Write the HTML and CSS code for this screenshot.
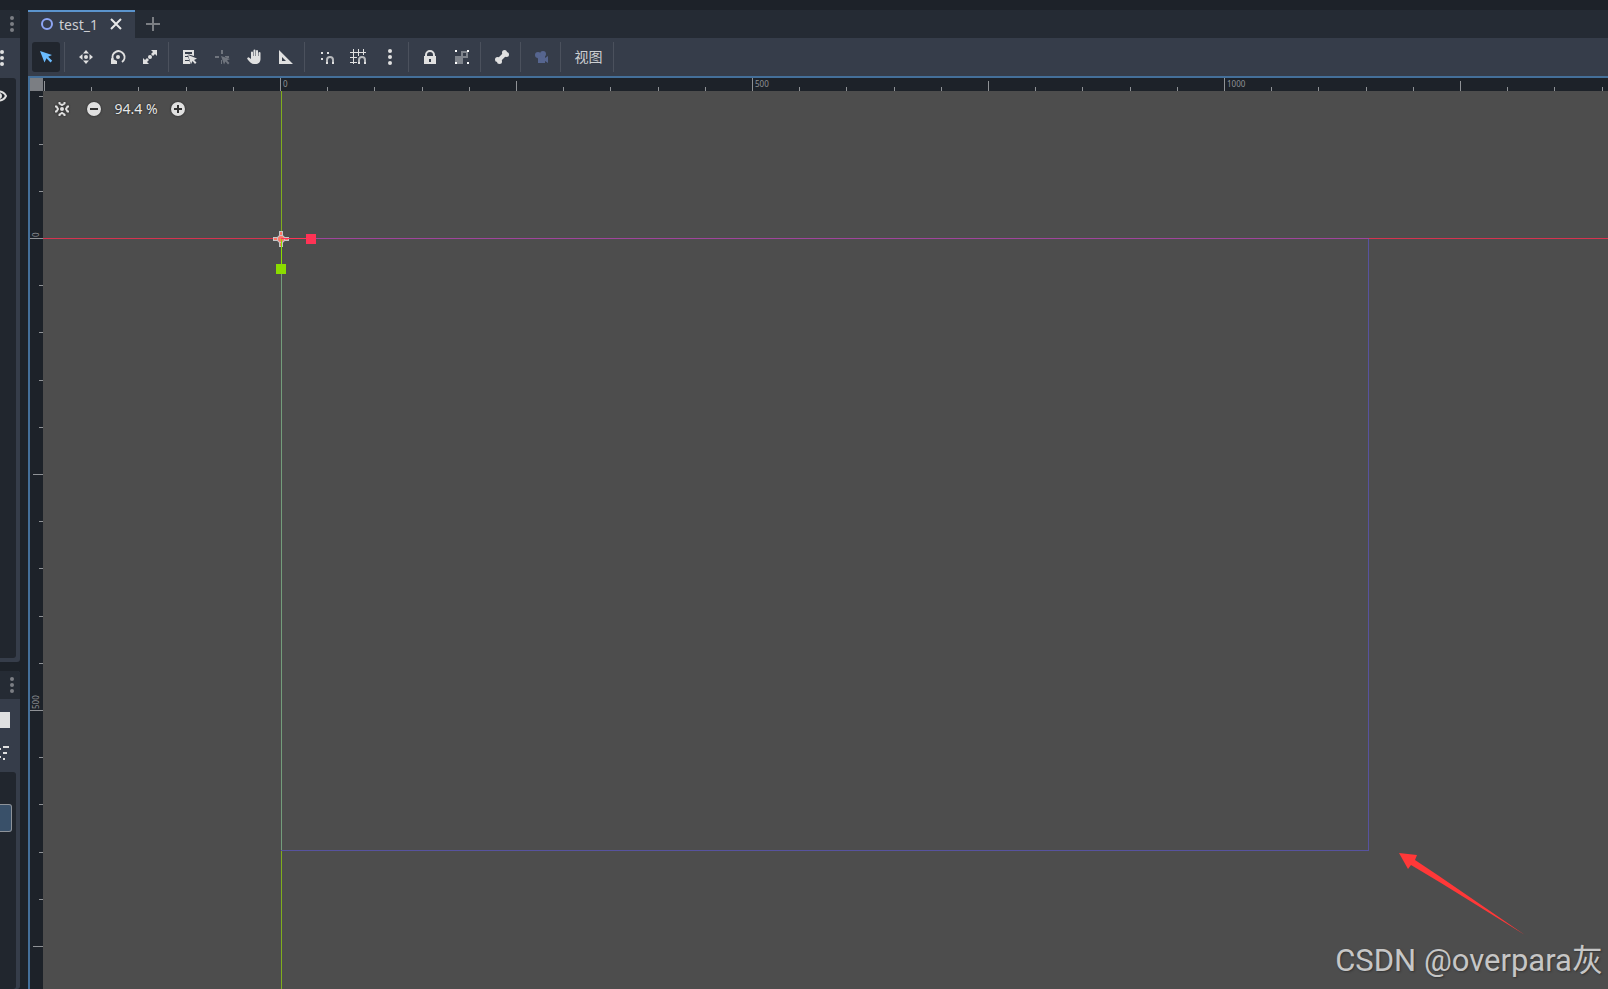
FILE: index.html
```html
<!DOCTYPE html>
<html lang="zh-CN">
<head>
    <meta charset="UTF-8">
    <meta name="viewport" content="width=device-width, initial-scale=1.0">
    <title>test_1</title>
    <link rel="stylesheet" href="styles.css">
</head>
<body>
    <aside class="docks">
        <section class="dock">
            <div class="dock-head">
                <button class="dock-btn" aria-label="Dock menu"><svg width="4" height="16" fill="#7b7e83"><circle cx="2" cy="2" r="2"/><circle cx="2" cy="8" r="2"/><circle cx="2" cy="14" r="2"/></svg></button>
            </div>
            <div class="dock-tools">
                <button class="dock-btn" aria-label="Scene menu"><svg width="4" height="16" fill="#e0e0e0"><circle cx="2" cy="2" r="2"/><circle cx="2" cy="8" r="2"/><circle cx="2" cy="14" r="2"/></svg></button>
            </div>
            <div class="tree">
                <button class="dock-btn" aria-label="Visibility"><svg width="7" height="16" viewBox="9 0 7 16" fill="none" stroke="#e0e0e0" stroke-width="2"><path d="M1 8c3-6 11-6 14 0-3 6-11 6-14 0z"/><circle cx="8" cy="8" r="2" fill="#e0e0e0"/></svg></button>
            </div>
        </section>
        <section class="dock">
            <div class="dock-head">
                <button class="dock-btn" aria-label="Dock menu"><svg width="4" height="16" fill="#7b7e83"><circle cx="2" cy="2" r="2"/><circle cx="2" cy="8" r="2"/><circle cx="2" cy="14" r="2"/></svg></button>
            </div>
            <div class="dock-tools files">
                <button class="dock-btn" aria-label="Split mode"><svg width="10" height="16" fill="#e0e0e0"><rect width="10" height="16"/></svg></button>
                <button class="dock-btn" aria-label="Sort files"><svg width="9" height="14" fill="#e0e0e0"><path d="M3 0h6v2H3zM3 6h4v2H3zM3 12h2v2H3zM0 2h1v2H0zM0 10h1v2H0z"/></svg></button>
            </div>
            <div class="tree">
                <div class="selected-row"></div>
            </div>
        </section>
    </aside>

    <main class="editor">
        <nav class="tabs">
            <div class="tab">
                <svg width="12" height="12" fill="none" stroke="#8da5f3" stroke-width="2"><circle cx="6" cy="6" r="5"/></svg>
                <a href="#">test_1</a>
                <button class="tab-close" aria-label="Close"><svg width="12" height="12" stroke="#e8e8e8" stroke-width="2"><path d="M1 1l10 10M11 1L1 11"/></svg></button>
            </div>
            <button class="tab-add" aria-label="New scene"><svg width="14" height="14" fill="#7b7e83"><path d="M6 0h2v6h6v2H8v6H6V8H0V6h6z"/></svg></button>
        </nav>

        <div class="toolbar">
            <button class="tool active" aria-label="Select"><svg viewBox="0 0 16 16"><path d="M2 2l4.500 11.500 2-4.200 4 4.200 1.700-1.700-4-4L14 6z"/></svg></button>
            <span class="sep"></span>
            <button class="tool" aria-label="Move"><svg viewBox="0 0 16 16"><path d="M8 1l3 3.500H5zM8 15l-3-3.500h6zM1 8l3.500-3v6zM15 8l-3.500 3V5z"/><circle cx="8" cy="8" r="2"/></svg></button>
            <button class="tool" aria-label="Rotate"><svg viewBox="0 0 16 16"><path d="M3 10.500A6 6 0 1 1 12 13" fill="none" stroke="#e0e0e0" stroke-width="2"/><path d="M1 9l6 3v3H1z"/><circle cx="8" cy="8" r="2"/></svg></button>
            <button class="tool" aria-label="Scale"><svg viewBox="0 0 16 16"><path d="M9 1h6v6l-2-2-2 2-2-2 2-2zM1 9l2 2 2-2 2 2-2 2 2 2H1z"/><circle cx="8" cy="8" r="2"/></svg></button>
            <span class="sep"></span>
            <button class="tool" aria-label="List selection"><svg viewBox="0 0 16 16"><path fill-rule="evenodd" d="M1 1h11v6l-5-1.500 3 8.500-1 1H1zM3 3v2h7V3zM3 7v1h3V7zM3 11v1h4v-1z"/><path d="M6 6l3 9 1.500-3 2.500 3 1.500-1.500-2.500-2.500 3-1.500z" stroke="#363d4a" stroke-width="1" paint-order="stroke"/></svg></button>
            <button class="tool dim" aria-label="Pivot"><svg viewBox="0 0 16 16"><path d="M7 1h2v4H7zM1 7h4v2H1zM11 7h4v2h-4zM7 11h1v4H7zM7 7l3 8.500 1.500-3 2.500 3 1.500-1.500-2.500-2.500 3-1.500z"/></svg></button>
            <button class="tool" aria-label="Pan"><svg viewBox="0 0 16 16"><path d="M5 9V3.500a1 1 0 0 1 2 0V7h.5V1.500a1 1 0 0 1 2 0V7h.5V2a1 1 0 0 1 2 0v5h.5V4a1 1 0 0 1 2 0v6c0 3-2 5-5 5H8c-2.500 0-4-1.500-6.700-5a1.200 1.200 0 0 1 1.700-1.500L5 10z"/></svg></button>
            <button class="tool" aria-label="Ruler"><svg viewBox="0 0 16 16"><path fill-rule="evenodd" d="M1 1l14 14H1zM4 8v4h4z"/></svg></button>
            <span class="sep"></span>
            <button class="tool" aria-label="Smart snap"><svg viewBox="0 0 16 16"><path d="M3 3h2v2H3zM9 3h2v2H9zM3 9h2v2H3z"/><path d="M9 15v-4a3 3 0 0 1 6 0v4" fill="none" stroke="#b8babd" stroke-width="2"/><path d="M8 13h2v2H8zM14 13h2v2h-2z"/></svg></button>
            <button class="tool" aria-label="Grid snap"><svg viewBox="0 0 16 16"><path d="M3 0h1v3h4V0h1v3h4V0h1v3h2v1h-2v2h-1V4H9v3H8V4H4v4h3v1H4v4h3v1H4v1H3v-1H0v-1h3V9H0V8h3V4H0V3h3z"/><path d="M9 15v-4a3 3 0 0 1 6 0v4" fill="none" stroke="#b8babd" stroke-width="2"/><path d="M8 13h2v2H8zM14 13h2v2h-2z"/></svg></button>
            <button class="tool" aria-label="Snap options"><svg viewBox="0 0 16 16"><circle cx="8" cy="2" r="2"/><circle cx="8" cy="8" r="2"/><circle cx="8" cy="14" r="2"/></svg></button>
            <span class="sep"></span>
            <button class="tool" aria-label="Lock"><svg viewBox="0 0 16 16"><path fill-rule="evenodd" d="M2 7h1V6a5 5 0 0 1 10 0v1h1v8H2zM5 7h6V6a3 3 0 0 0-6 0zM7 10v3h2v-3z"/></svg></button>
            <button class="tool" aria-label="Group"><svg viewBox="0 0 16 16"><path fill="#7f848c" fill-rule="evenodd" d="M7 2h7v7H9v6H1V7h6zM9 4v3h3V4z"/><path fill="#fff" d="M1 1h2v2H1zM13 1h2v2h-2zM1 13h2v2H1zM13 13h2v2h-2z"/></svg></button>
            <span class="sep"></span>
            <button class="tool" aria-label="Skeleton"><svg viewBox="0 0 16 16"><path d="M4.500 11.500l7-7" stroke="#e0e0e0" stroke-width="4"/><circle cx="10.500" cy="3.500" r="2.500"/><circle cx="12.500" cy="5.500" r="2.500"/><circle cx="3.500" cy="10.500" r="2.500"/><circle cx="5.500" cy="12.500" r="2.500"/></svg></button>
            <span class="sep"></span>
            <button class="tool camera" aria-label="Override camera"><svg viewBox="0 0 16 16"><circle cx="9" cy="5" r="3"/><circle cx="4" cy="6" r="3"/><path d="M3 7h8v2l3-2v7l-3-2v2H4v-4z"/></svg></button>
            <span class="sep"></span>
            <button class="tool view">视图</button>
            <span class="sep"></span>
        </div>

        <div class="workspace">
            <div class="corner"></div>
            <svg class="ruler-top" id="ruler-top"></svg>
            <svg class="ruler-left" id="ruler-left"></svg>
            <div class="canvas">
                <svg class="scene">
                    <!-- viewport bounds -->
                    <rect x="238" y="147" width="1088" height="1" fill="#a0459c"/>
                    <rect x="1325" y="148" width="1" height="612" fill="#57539f"/>
                    <rect x="238" y="759" width="1088" height="1" fill="#57539f"/>
                    <!-- axes -->
                    <rect y="147" width="238" height="1" fill="#d63350"/>
                    <rect x="1326" y="147" width="100%" height="1" fill="#d63350"/>
                    <rect x="238" width="1" height="147" fill="#80ad1d"/>
                    <rect x="238" y="183" width="1" height="576" fill="#739d7b"/>
                    <rect x="238" y="760" width="1" height="100%" fill="#80ad1d"/>
                    <!-- pivot and handles -->
                    <g fill="#c6c6c6">
                        <path d="M236 140h4v6h6v4h-6v6h-4v-6h-6v-4h6z"/>
                        <circle cx="238" cy="148" r="4"/>
                    </g>
                    <g fill="#ff7466">
                        <path d="M237 141h2v3h-2zM237 152h2v3h-2zM231 147h3v2h-3zM242 147h3v2h-3z"/>
                        <circle cx="238" cy="148" r="3"/>
                    </g>
                    <rect x="238" y="147" width="26" height="1" fill="#ff3355"/>
                    <rect x="238" y="148" width="1" height="26" fill="#8bdc00"/>
                    <rect x="263" y="143" width="10" height="10" fill="#ff3355"/>
                    <rect x="233" y="173" width="10" height="10" fill="#8bdc00"/>
                    <!-- arrow -->
                    <path d="M1356 762l18 2-2 5 24 16 86 59-84-52-30-18-3 4z" fill="#ff3838"/>
                </svg>
                <div class="zoom">
                    <button class="zoom-btn" aria-label="Center view"><svg viewBox="0 0 16 16"><circle cx="8" cy="8" r="2"/><path d="M5.500 1v1.500L8 4l2.500-1.500V1M5.500 15v-1.500L8 12l2.500 1.500V15M1 5.500h1.500L4 8l-1.500 2.500H1M15 5.500h-1.500L12 8l1.500 2.500H15" fill="none" stroke="#e0e0e0" stroke-width="2"/></svg></button>
                    <button class="zoom-btn" aria-label="Zoom out"><svg viewBox="0 0 16 16"><circle cx="8" cy="8" r="7"/><path fill="#333" d="M4 7h8v2H4z"/></svg></button>
                    <button class="zoom-value">94.4 %</button>
                    <button class="zoom-btn" aria-label="Zoom in"><svg viewBox="0 0 16 16"><circle cx="8" cy="8" r="7"/><path fill="#333" d="M7 4h2v3h3v2H9v3H7V9H4V7h3z"/></svg></button>
                </div>
                <div class="watermark">CSDN @overpara灰</div>
            </div>
        </div>
    </main>
    <script src="rulers.js"></script>
</body>
</html>
```
FILE: styles.css
```css
* {
    box-sizing: border-box;
}
body {
    margin: 0;
    padding-top: 10px;
    height: 100vh;
    display: flex;
    gap: 8px;
    overflow: hidden;
    background: #1d2229;
    color: #cdcfd2;
    font-family: "Noto Sans", "Noto Sans CJK SC", sans-serif;
    font-size: 14px;
}
button {
    margin: 0;
    padding: 0;
    border: 0;
    background: none;
    color: inherit;
    font: inherit;
    cursor: pointer;
}
svg {
    display: block;
}

/* left docks */
.docks {
    width: 20px;
    display: grid;
    grid-template-rows: 652fr 318fr;
    gap: 9px;
}
.dock {
    display: flex;
    flex-direction: column;
    background: #363d4a;
    border-radius: 0 3px 3px 0;
    overflow: hidden;
}
.dock-head {
    height: 28px;
    display: flex;
    align-items: center;
    padding-left: 10px;
    background: #252b34;
}
.dock-tools {
    height: 40px;
    display: flex;
    align-items: center;
}
.dock-tools.files {
    height: 73px;
    flex-direction: column;
    align-items: flex-start;
    gap: 18px;
    padding-top: 13px;
}
.tree {
    flex: 1;
    margin: 0 4px 4px 0;
    padding-top: 10px;
    background: #21262e;
    border-radius: 0 3px 3px 0;
}
.files + .tree {
    margin-bottom: 0;
    padding-top: 32px;
}
.selected-row {
    width: 12px;
    height: 28px;
    background: #395069;
    border: 1px solid #8d9299;
    border-left: 0;
    border-radius: 0 3px 3px 0;
}

/* scene tabs */
.editor {
    flex: 1;
    min-width: 0;
    display: flex;
    flex-direction: column;
}
.tabs {
    height: 28px;
    display: flex;
    background: #252b34;
}
.tab {
    display: flex;
    align-items: center;
    padding: 0 13px;
    background: #363d4a;
    box-shadow: inset 0 2px #5b94cd;
}
.tab a {
    margin: 0 12px 0 6px;
    color: #cdcfd2;
    text-decoration: none;
}
.tab-add {
    width: 36px;
    display: flex;
    align-items: center;
    justify-content: center;
}

/* toolbar */
.toolbar {
    height: 38px;
    display: flex;
    align-items: center;
    gap: 4px;
    padding: 0 4px;
    background: #363d4a;
}
.tool {
    width: 28px;
    height: 30px;
    display: flex;
    align-items: center;
    justify-content: center;
    border-radius: 3px;
}
.tool svg, .zoom-btn svg {
    width: 16px;
    height: 16px;
    fill: #e0e0e0;
}
.tool.active {
    background: #21262e;
}
.tool.active svg {
    fill: #69bbff;
}
.tool.dim svg {
    fill: #6f747d;
}
.tool.camera svg {
    fill: #56658f;
}
.tool.view {
    width: 41px;
    padding-bottom: 2px;
}
.sep {
    width: 4px;
    height: 30px;
    border-left: 1px solid #4b515d;
}

/* 2D view */
.workspace {
    flex: 1;
    min-height: 0;
    display: grid;
    grid-template-columns: 13px 1fr;
    grid-template-rows: 13px 1fr;
    border-top: 2px solid #446f99;
    border-left: 2px solid #446f99;
}
.corner {
    background: #7b7e83;
}
.ruler-top, .ruler-left {
    width: 100%;
    height: 100%;
    overflow: hidden;
    fill: #8f9296;
    font-size: 8px;
}
.canvas {
    position: relative;
    min-height: 0;
    background: #4d4d4d;
    overflow: hidden;
}
.scene {
    position: absolute;
    width: 100%;
    height: 100%;
}
.zoom {
    position: absolute;
    top: 4px;
    left: 5px;
    display: flex;
    align-items: center;
    gap: 4px;
}
.zoom-btn {
    width: 28px;
    height: 28px;
    display: flex;
    align-items: center;
    justify-content: center;
    filter: drop-shadow(0 0 1px #222);
}
.zoom-value {
    width: 48px;
    padding-bottom: 2px;
    color: #e8e8e8;
    text-shadow: 0 0 2px #111;
    white-space: nowrap;
}
.watermark {
    position: absolute;
    right: 5px;
    bottom: 6px;
    color: #c6c6c6;
    font-family: Roboto, "Noto Sans CJK SC", sans-serif;
    font-size: 31px;
    line-height: 44px;
    text-shadow: 1px 1px 2px #333;
}
```
FILE: rulers.js
```js
const zoom = 0.944;
const step = 50;

function rect(x, y, w, h) {
    return `<rect x="${x}" y="${y}" width="${w}" height="${h}"/>`;
}

// ticks every 50 units, longer at 250, full length with a number at 500
function drawRuler(id, origin, from, vertical) {
    const ruler = document.getElementById(id);
    const box = ruler.getBoundingClientRect();
    const length = vertical ? box.height : box.width;
    let out = "";
    for (let value = from; origin + value * zoom < length; value += step) {
        const pos = Math.round(origin + value * zoom);
        let size = 4;
        if (value % 250 === 0) size = 10;
        if (value % 500 === 0) size = 13;
        out += vertical ? rect(13 - size, pos, size, 1) : rect(pos, 13 - size, 1, size);
        if (value % 500 === 0) {
            out += vertical
                ? `<text transform="translate(9 ${pos - 1}) rotate(-90)">${value}</text>`
                : `<text x="${pos + 3}" y="9">${value}</text>`;
        }
    }
    ruler.innerHTML = out;
}

function drawRulers() {
    drawRuler("ruler-top", 237, -250, false);
    drawRuler("ruler-left", 147, -150, true);
}

window.addEventListener("resize", drawRulers);
drawRulers();
```
